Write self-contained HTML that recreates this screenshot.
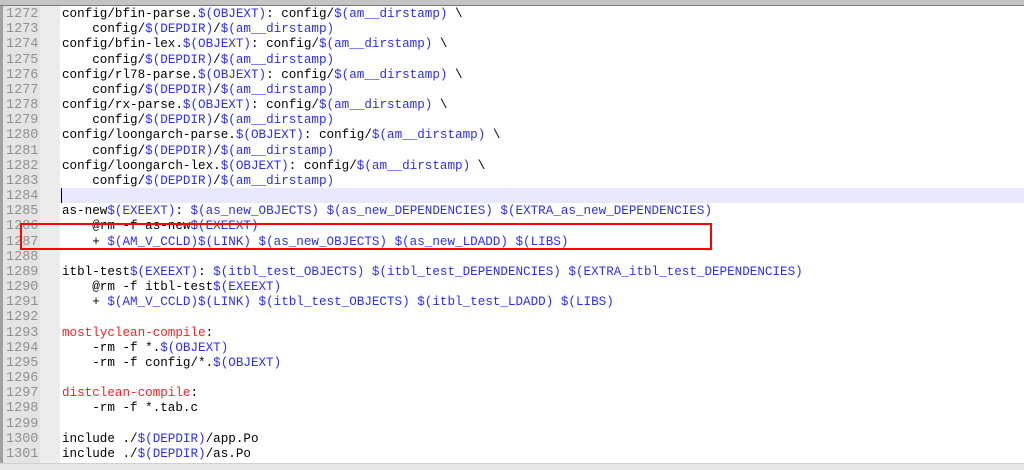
<!DOCTYPE html>
<html><head><style>
body{margin:0;width:1024px;height:469px;overflow:hidden;background:#fff;position:relative;font-family:"Liberation Mono",monospace;}
.tabs{position:absolute;left:0;top:0;width:1024px;height:5px;background:#c4c4c4;border-bottom:1px solid #7a7a7a;}
.gut{position:absolute;left:0;top:6px;width:40px;height:460px;background:#e4e4e4;border-left:3px solid #a0a0a0;box-sizing:border-box;}
.fold{position:absolute;left:40px;top:6px;width:20px;height:460px;background:#ececec;}
.hl{position:absolute;left:60px;top:188px;width:964px;height:15px;background:#e8e8ff;}
.caret{position:absolute;left:61px;top:188px;width:1px;height:15px;background:#000;}
.code{position:absolute;left:0;top:7px;font-size:12.6px;line-height:15.17px;white-space:pre;}
.ln{display:inline-block;width:55px;padding-left:6px;box-sizing:border-box;color:#909090;font-size:13.5px;vertical-align:top;}
.t{display:inline-block;margin-left:7px;vertical-align:top;}
b{font-weight:normal;color:#2c2cff}
i{font-style:normal;color:#ff2020}
.box{position:absolute;left:20px;top:223px;width:692px;height:27px;border:2px solid #f00;box-sizing:border-box;}
.sb{position:absolute;left:0;top:463px;width:1024px;height:6px;background:#e8e8e8;border-top:1px solid #d0d0d0;}
</style></head><body>
<div class="tabs"></div>
<div class="gut"></div><div class="fold"></div>
<div class="hl"></div><div class="caret"></div>
<div class="code"><span class="ln">1272</span><span class="t">config/bfin-parse.<b>$(OBJEXT)</b>: config/<b>$(am__dirstamp)</b> \</span>
<span class="ln">1273</span><span class="t">    config/<b>$(DEPDIR)</b>/<b>$(am__dirstamp)</b></span>
<span class="ln">1274</span><span class="t">config/bfin-lex.<b>$(OBJEXT)</b>: config/<b>$(am__dirstamp)</b> \</span>
<span class="ln">1275</span><span class="t">    config/<b>$(DEPDIR)</b>/<b>$(am__dirstamp)</b></span>
<span class="ln">1276</span><span class="t">config/rl78-parse.<b>$(OBJEXT)</b>: config/<b>$(am__dirstamp)</b> \</span>
<span class="ln">1277</span><span class="t">    config/<b>$(DEPDIR)</b>/<b>$(am__dirstamp)</b></span>
<span class="ln">1278</span><span class="t">config/rx-parse.<b>$(OBJEXT)</b>: config/<b>$(am__dirstamp)</b> \</span>
<span class="ln">1279</span><span class="t">    config/<b>$(DEPDIR)</b>/<b>$(am__dirstamp)</b></span>
<span class="ln">1280</span><span class="t">config/loongarch-parse.<b>$(OBJEXT)</b>: config/<b>$(am__dirstamp)</b> \</span>
<span class="ln">1281</span><span class="t">    config/<b>$(DEPDIR)</b>/<b>$(am__dirstamp)</b></span>
<span class="ln">1282</span><span class="t">config/loongarch-lex.<b>$(OBJEXT)</b>: config/<b>$(am__dirstamp)</b> \</span>
<span class="ln">1283</span><span class="t">    config/<b>$(DEPDIR)</b>/<b>$(am__dirstamp)</b></span>
<span class="ln">1284</span><span class="t"></span>
<span class="ln">1285</span><span class="t">as-new<b>$(EXEEXT)</b>: <b>$(as_new_OBJECTS)</b> <b>$(as_new_DEPENDENCIES)</b> <b>$(EXTRA_as_new_DEPENDENCIES)</b></span>
<span class="ln">1286</span><span class="t">    @rm -f as-new<b>$(EXEEXT)</b></span>
<span class="ln">1287</span><span class="t">    + <b>$(AM_V_CCLD)$(LINK)</b> <b>$(as_new_OBJECTS)</b> <b>$(as_new_LDADD)</b> <b>$(LIBS)</b></span>
<span class="ln">1288</span><span class="t"></span>
<span class="ln">1289</span><span class="t">itbl-test<b>$(EXEEXT)</b>: <b>$(itbl_test_OBJECTS)</b> <b>$(itbl_test_DEPENDENCIES)</b> <b>$(EXTRA_itbl_test_DEPENDENCIES)</b></span>
<span class="ln">1290</span><span class="t">    @rm -f itbl-test<b>$(EXEEXT)</b></span>
<span class="ln">1291</span><span class="t">    + <b>$(AM_V_CCLD)$(LINK)</b> <b>$(itbl_test_OBJECTS)</b> <b>$(itbl_test_LDADD)</b> <b>$(LIBS)</b></span>
<span class="ln">1292</span><span class="t"></span>
<span class="ln">1293</span><span class="t"><i>mostlyclean-compile</i>:</span>
<span class="ln">1294</span><span class="t">    -rm -f *.<b>$(OBJEXT)</b></span>
<span class="ln">1295</span><span class="t">    -rm -f config/*.<b>$(OBJEXT)</b></span>
<span class="ln">1296</span><span class="t"></span>
<span class="ln">1297</span><span class="t"><i>distclean-compile</i>:</span>
<span class="ln">1298</span><span class="t">    -rm -f *.tab.c</span>
<span class="ln">1299</span><span class="t"></span>
<span class="ln">1300</span><span class="t">include ./<b>$(DEPDIR)</b>/app.Po</span>
<span class="ln">1301</span><span class="t">include ./<b>$(DEPDIR)</b>/as.Po</span>
</div>
<div class="box"></div>
<div class="sb"></div>
</body></html>
